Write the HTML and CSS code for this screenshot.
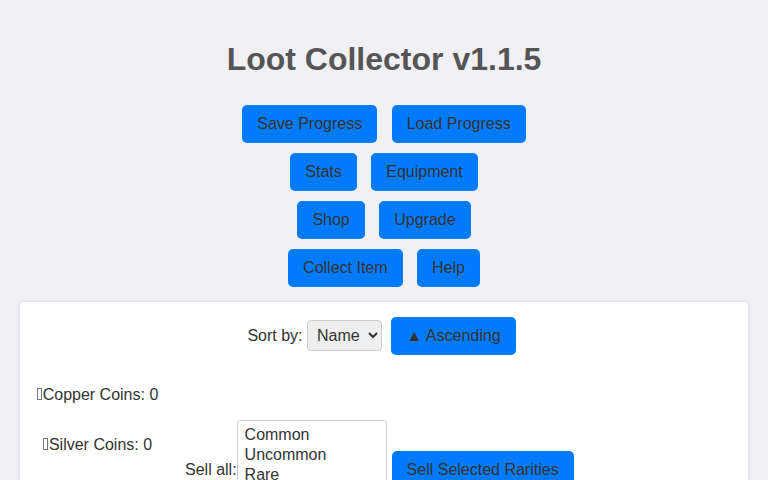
FILE: index.html
```html
<!DOCTYPE html>
<html lang="en">
<head>
    <meta charset="UTF-8">
    <meta name="viewport" content="width=device-width, initial-scale=1.0">
    <title>Loot Collector</title>
    <link rel="stylesheet" href="styles.css">
</head>
<body>
    <h1>Loot Collector v1.1.5</h1>

    <!-- Tombol menu utama -->
    <div class="menu-row">
        <button>Save Progress</button>
        <button>Load Progress</button>
    </div>
    <div class="menu-row">
        <button>Stats</button>
        <button>Equipment</button>
    </div>
    <div class="menu-row">
        <button>Shop</button>
        <button>Upgrade</button>
    </div>
    <div class="menu-row">
        <button>Collect Item</button>
        <button>Help</button>
    </div>

    <div class="inventory">
        <div class="sort-controls">
            <label for="sortBy">Sort by:</label>
            <select id="sortBy" class="sort-select">
                <option value="name">Name</option>
                <option value="rarity">Rarity</option>
                <option value="value">Value</option>
            </select>
            <button>&#9650; Ascending</button>
        </div>

        <div class="inventory-body">
            <!-- Daftar koin -->
            <div class="coins">
                <div class="coin"><span class="coin-icon"></span>Copper Coins: 0</div>
                <div class="coin"><span class="coin-icon"></span>Silver Coins: 0</div>
            </div>
            <div class="sell-all">
                <label for="sellRarity">Sell all:</label>
                <select id="sellRarity" class="rarity-select" multiple>
                    <option>Common</option>
                    <option>Uncommon</option>
                    <option>Rare</option>
                    <option>Epic</option>
                    <option>Legendary</option>
                </select>
                <button>Sell Selected Rarities</button>
            </div>
        </div>
    </div>
</body>
</html>
```

FILE: styles.css
```css
body {
    font-family: "Liberation Sans", Arial, sans-serif;
    background-color: #f0f0f5;
    color: #333;
    margin: 0;
    padding: 20px;
}
h1 {
    text-align: center;
    color: #555;
    font-size: 32px;
    margin: 0.67em 0;
}
.menu-row {
    text-align: center;
}
button {
    font-family: inherit;
    font-size: 16px;
    color: #333;
    background-color: #007bff;
    border: none;
    border-radius: 5px;
    padding: 10px 15px;
    margin: 5px;
    cursor: pointer;
}
button:hover {
    background-color: #0069d9;
}
.inventory {
    background-color: white;
    border-radius: 5px;
    box-shadow: 0 0 5px rgba(0, 0, 0, 0.1);
    margin-top: 10px;
    padding: 10px;
}
.sort-controls {
    text-align: center;
    margin-bottom: 10px;
}
.sort-select {
    font-family: inherit;
    font-size: 16px;
    color: #333;
    background-color: #efefef;
    padding: 5px;
    border: 1px solid #ccc;
    border-radius: 4px;
}
.inventory-body {
    display: flex;
    align-items: flex-start;
}
.coins {
    width: 135px;
    text-align: center;
}
.coin {
    line-height: 20px;
    padding: 15px 0;
}
.coin-icon {
    display: inline-block;
    width: 3px;
    height: 10px;
    border: 1px solid #777;
    margin-right: 1px;
}
.sell-all {
    display: flex;
    align-items: center;
    margin-top: 50px;
    margin-left: 20px;
}
.rarity-select {
    font-family: inherit;
    font-size: 16px;
    color: #333;
    width: 150px;
    height: 100px;
    padding: 5px;
    border: 1px solid #ccc;
    border-radius: 4px;
    background-color: white;
}
.sell-all button {
    margin: 5px;
}
```
